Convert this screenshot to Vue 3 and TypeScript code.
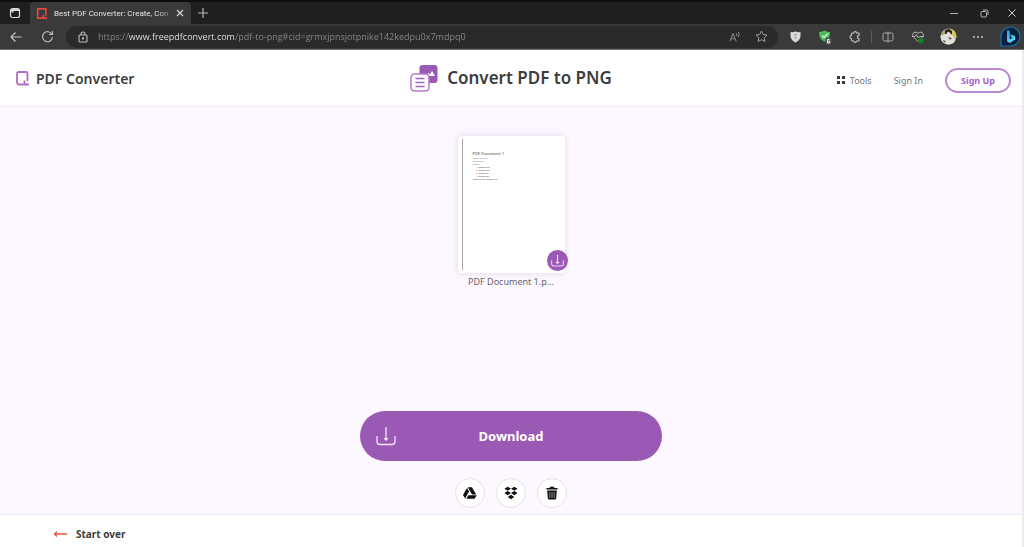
<script setup lang="ts">
import { ref } from 'vue'

const address = ref('https://www.freepdfconvert.com/pdf-to-png#cid=grmxjpnsjotpnike142kedpu0x7mdpq0')
const previewSteps: string[] = ['Sample one', 'Sample two', 'Sample six', 'Sample ten']
</script>

<template>
  <div class="window">
    <div class="tabbar">
      <button class="tab-menu" type="button" aria-label="Tab actions">
        <svg width="12" height="12" viewBox="0 0 12 12" fill="none" stroke="#d8d8d8" stroke-width="1.2">
          <rect x="1.5" y="1.5" width="9" height="9" rx="2" />
          <path d="M2 3h8M3.500 3v2.500" stroke-width="2" />
        </svg>
      </button>
      <div class="tab">
        <svg class="tab-icon" width="12" height="13" viewBox="0 0 14 15" fill="none" stroke="#e2483d" stroke-width="2">
          <path d="M8 13H2V2h9.500v8M8.500 9v4H13" />
        </svg>
        <span class="tab-title">Best PDF Converter: Create, Con</span>
        <button class="tab-close" type="button" aria-label="Close tab">
          <svg width="8" height="8" viewBox="0 0 8 8" stroke="#d5d5d5" stroke-width="1.2"><path d="M1 1l6 6M7 1L1 7" /></svg>
        </button>
      </div>
      <button class="new-tab" type="button" aria-label="New tab">
        <svg width="10" height="10" viewBox="0 0 10 10" stroke="#b5b5b5" stroke-width="1.2"><path d="M5 0v10M0 5h10" /></svg>
      </button>
      <div class="controls">
        <button type="button" aria-label="Minimize"><svg width="8" height="8" viewBox="0 0 8 8" stroke="#b0b0b0"><path d="M0 4.500h8" /></svg></button>
        <button type="button" aria-label="Restore">
          <svg width="9" height="9" viewBox="0 0 9 9" fill="none" stroke="#b5b5b5"><rect x="1" y="2.500" width="5.500" height="5.500" rx="1" /><path d="M3 1h3.500A1.500 1.500 0 0 1 8 2.500V6" /></svg>
        </button>
        <button type="button" aria-label="Close"><svg width="8" height="8" viewBox="0 0 8 8" stroke="#d0d0d0"><path d="M.5.5l7 7M7.500.5l-7 7" /></svg></button>
      </div>
    </div>

    <div class="toolbar">
      <button class="nav-btn" type="button" aria-label="Back">
        <svg width="12" height="12" viewBox="0 0 12 12" fill="none" stroke="#c4c4c4" stroke-width="1.200"><path d="M11.500 6H1M5.500 1.500L1 6l4.500 4.500" /></svg>
      </button>
      <button class="nav-btn" type="button" aria-label="Refresh">
        <svg width="13" height="13" viewBox="0 0 13 13" fill="none" stroke="#b8b8b8" stroke-width="1.200"><path d="M11 4.500A5 5 0 1 0 11.500 7M11.500 1v3.500H8" /></svg>
      </button>
      <div class="address">
        <svg width="10" height="12" viewBox="0 0 10 12" fill="none" stroke="#c0c0c0" stroke-width="1.100"><rect x="1" y="4" width="8" height="7" rx="1" /><path d="M3 4V3a2 2 0 0 1 4 0v1" /><circle cx="5" cy="7.500" r=".6" fill="#c0c0c0" /></svg>
        <input v-model="address" class="url" type="text" aria-label="Address" spellcheck="false" />
        <button class="pill-btn" type="button" aria-label="Read aloud">
          <svg width="12" height="12" viewBox="0 0 12 12" fill="none" stroke="#8c8c8c"><path d="M.8 10.500L4 2.500l3.200 8M2 7.800h4M7.300 2.200q1.200 1.300 0 3M9.300 1q2 2.400 0 5" /></svg>
        </button>
        <button class="pill-btn" type="button" aria-label="Add to favorites">
          <svg width="13" height="13" viewBox="0 0 13 13" fill="none" stroke="#9c9c9c" stroke-linejoin="round"><path d="M6.500 1l1.700 3.500 3.800.5-2.800 2.700.7 3.800-3.400-1.800-3.400 1.800.7-3.800L1 5l3.800-.5z" /></svg>
        </button>
      </div>
      <button class="ext" type="button" aria-label="Shield">
        <svg width="11" height="12" viewBox="0 0 11 12"><path d="M.5 1Q3 1.500 5.500.5 8 1.500 10.500 1v4c0 3-2 5-5 6.500C2.500 10 .5 8 .5 5z" fill="#d9d9d9" /><path d="M7 3.500C4.500 3 4 4.500 5 5.300s2 1.200.3 2.700" fill="none" stroke="#8d8d8d" /></svg>
      </button>
      <button class="ext" type="button" aria-label="Protection">
        <svg width="16" height="16" viewBox="0 0 16 16"><path d="M2 3q3 0 5.500-1.500Q10 3 13 3c0 5-1.500 7.500-5.500 9.500C3.500 10.500 2 8 2 3z" fill="#4cba58" /><path d="M5 6.500l2 2 4-4" fill="none" stroke="#d7f3da" stroke-width="1.300" /><rect x="8.500" y="8.500" width="6" height="7" rx="1.500" fill="#555" /><path d="M12.500 10.500h-2v3.500h2v-1.800h-2" fill="none" stroke="#eee" /></svg>
      </button>
      <button class="ext" type="button" aria-label="Extensions">
        <svg width="12" height="12" viewBox="0 0 12 12" fill="none" stroke="#bdbdbd" stroke-width="1.200" stroke-linejoin="round"><path d="M3.500 2h1.300a1.400 1.400 0 0 1 2.800 0H10v2.300a1.600 1.600 0 0 0 0 3.200V10H7.600a1.400 1.400 0 0 1-2.800 0H3.500a1 1 0 0 1-1-1V7.500a1.500 1.500 0 0 1 0-3V3a1 1 0 0 1 1-1z" /></svg>
      </button>
      <span class="divider"></span>
      <button class="ext" type="button" aria-label="Split screen">
        <svg width="12" height="12" viewBox="0 0 12 12" fill="none" stroke="#a9a9a9"><rect x="1" y="2" width="10" height="8" rx="1.500" /><path d="M6 .5v11" /></svg>
      </button>
      <button class="ext" type="button" aria-label="Browser essentials">
        <svg width="14" height="14" viewBox="0 0 14 14" fill="none" stroke="#b2b2b2"><path d="M7 11.500L2 6.500C.2 3 4.800.5 7 3.500c2.200-3 6.800-.5 5 3z" /><path d="M1 6.500h3l1.300-2 2 3.500 1.200-1.500H13" /><circle cx="10" cy="10.500" r="2.700" fill="#168020" stroke="none" /></svg>
      </button>
      <button class="ext" type="button" aria-label="Profile">
        <svg width="17" height="17" viewBox="0 0 17 17"><defs><clipPath id="face"><circle cx="8.500" cy="8.500" r="8" /></clipPath></defs><g clip-path="url(#face)"><path d="M0 0h17v17H0z" fill="#a9a77c" /><path d="M10 0h7v10h-5z" fill="#cfc65b" /><path d="M0 8l5-2 7 1 3 4-1 6H0z" fill="#e3dfdc" /><path d="M5 2l4-1 3 2v3H5z" fill="#292824" /><circle cx="8.500" cy="6" r="2" fill="#eee6da" /><path d="M8 9l4 1-2 2zM3 12l3 1-2 2z" fill="#5a6145" /></g></svg>
      </button>
      <button class="ext" type="button" aria-label="Settings and more">
        <svg width="10" height="4" viewBox="0 0 10 4" fill="#c6c6c6"><circle cx="1" cy="2" r="1" /><circle cx="5" cy="2" r="1" /><circle cx="9" cy="2" r="1" /></svg>
      </button>
      <button class="ext bing" type="button" aria-label="Bing">
        <svg width="21" height="21" viewBox="0 0 21 21"><defs><linearGradient id="bingFill" x1="0" y1="0" x2="0.500" y2="1"><stop stop-color="#2b8ff0" /><stop offset="1" stop-color="#6adcf6" /></linearGradient></defs><path d="M1 20V10.500A9.500 9.500 0 1 1 10.500 20z" fill="#0b2039" stroke="#1870ae" stroke-width="1.200" /><path d="M7 4l2.700 1v8.500l3-1.700-1.500-.8-1-2.800 5 2v3.300L9.700 17 7 15.300z" fill="url(#bingFill)" /></svg>
      </button>
    </div>

    <div class="site">
      <header class="header">
        <a class="brand" href="#">
          <svg width="14" height="15" viewBox="0 0 14 15" fill="none" stroke="#ae6bc9" stroke-width="1.800"><path d="M7.500 13.500H3a2 2 0 0 1-2-2v-9a1.500 1.500 0 0 1 1.500-1.500h7.500a1.500 1.500 0 0 1 1.500 1.500V10M8.500 9.500v4H13" /></svg>
          <span>PDF Converter</span>
        </a>
        <h1 class="title">
          <svg width="28" height="28" viewBox="0 0 28 28"><rect x="9.500" y="1" width="18" height="18" rx="3" fill="#9b59b6" /><path d="M16 12l2.300-3 1.500 1.500L22 7l3 5z" fill="#fff" /><rect x="1" y="10" width="18" height="17" rx="3.500" fill="#fff" stroke="#b579cd" stroke-width="1.500" /><path d="M5.500 14.500h9M5.500 18.500h9M5.500 22.500h9" stroke="#a564bf" stroke-width="1.300" /></svg>
          <span>Convert PDF to PNG</span>
        </h1>
        <nav class="links">
          <a class="tools" href="#">
            <svg width="8" height="8" viewBox="0 0 8 8" fill="#333"><rect width="3" height="3" rx=".5" /><rect x="5" width="3" height="3" rx=".5" /><rect y="5" width="3" height="3" rx=".5" /><rect x="5" y="5" width="3" height="3" rx=".5" /></svg>
            Tools
          </a>
          <a href="#">Sign In</a>
          <a class="signup" href="#">Sign Up</a>
        </nav>
      </header>

      <main class="main">
        <figure class="doc">
          <div class="sheet">
            <div class="page">
              <p class="page-title">PDF Document 1</p>
              <p class="page-text">Sample text one</p>
              <p class="page-text">Sample text</p>
              <p class="page-text">Sample</p>
              <ol class="page-list">
                <li v-for="step in previewSteps" :key="step">{{ step }}</li>
              </ol>
              <p class="page-last">Thank you for reading this</p>
            </div>
            <button class="badge" type="button" aria-label="Download file">
              <svg width="13" height="13" viewBox="0 0 20 20" fill="none" stroke="#efdcf7" stroke-width="1.600"><path d="M1 10v5.500a3 3 0 0 0 3 3h12a3 3 0 0 0 3-3V10M10 1v13M7.500 12l2.500 2.500 2.500-2.500" /></svg>
            </button>
          </div>
          <figcaption>PDF Document 1.p...</figcaption>
        </figure>

        <div class="actions">
          <button class="download" type="button">
            <svg width="20" height="20" viewBox="0 0 20 20" fill="none" stroke="#f3e5f9" stroke-width="1.300"><path d="M1 10v5.500a3 3 0 0 0 3 3h12a3 3 0 0 0 3-3V10M10 1v13" /><path d="M7.500 12h5L10 15z" fill="#fff" stroke="none" /></svg>
            <span>Download</span>
          </button>
          <div class="round-row">
            <button type="button" aria-label="Save to Google Drive">
              <svg width="14" height="14" viewBox="0 0 14 14" fill="#111"><path d="M4.700 1.200h4.200l4.300 7.200H9.100zM4 2l2.100 3.600-4 7L0 9zM5.400 9.200h8.300l-2.100 3.600H3.300z" /></svg>
            </button>
            <button type="button" aria-label="Save to Dropbox">
              <svg width="14" height="14" viewBox="0 0 14 14" fill="#111"><path d="M3.700.7l3.300 2-3.300 2.100-3.300-2.100zM10.300.7l3.300 2-3.300 2.100L7 2.700zM3.700 5l3.300 2.100-3.300 2.100L.4 7.100zM10.300 5l3.300 2.100-3.300 2.100L7 7.100zM7 8.800l3.300 2.100L7 13.200l-3.300-2.300z" /></svg>
            </button>
            <button type="button" aria-label="Delete">
              <svg width="12" height="14" viewBox="0 0 12 14"><path d="M.5 2h3l.7-1.200h3.600L8.500 2h3v1.600H.5zM1.200 4.400h9.600L10.200 12a1.500 1.500 0 0 1-1.500 1.500H3.300A1.500 1.500 0 0 1 1.800 12z" fill="#111" /><path d="M3.800 6v6M6 6v6M8.200 6v6" stroke="#aaa" stroke-width=".8" /></svg>
            </button>
          </div>
        </div>
      </main>

      <footer class="footer">
        <a class="over" href="#">
          <svg width="14" height="8" viewBox="0 0 14 8" fill="none" stroke="#e4573f" stroke-width="1.300"><path d="M14 4H2M4 1.500L1.500 4 4 6.500" /></svg>
          Start over
        </a>
      </footer>
    </div>
  </div>
</template>

<style>
body {
  background: #fff;
}
</style>

<style scoped>
* {
  box-sizing: border-box;
}
.window {
  min-height: 100vh;
  display: flex;
  flex-direction: column;
  font-family: "Noto Sans", "Open Sans", sans-serif;
  color: #3d3d3d;
}
button {
  border: 0;
  padding: 0;
  background: none;
  display: flex;
  align-items: center;
  justify-content: center;
  font: inherit;
}
a {
  color: inherit;
  text-decoration: none;
}
svg {
  display: block;
  flex: none;
}
.tabbar {
  height: 24px;
  display: flex;
  align-items: stretch;
  background: #1f1f1f;
  border-top: 2px solid #0c0c0c;
}
.tab-menu {
  width: 30px;
}
.tab {
  width: 161px;
  display: flex;
  align-items: center;
  padding: 0 6px;
  background: #3a3a3a;
  border-radius: 4px 4px 0 0;
}
.tab-title {
  flex: 1;
  min-width: 0;
  margin-left: 6px;
  white-space: nowrap;
  font-family: Roboto, sans-serif;
  font-size: 8px;
  color: #e4e4e4;
  mask-image: linear-gradient(90deg, #000 85%, transparent);
}
.tab-close {
  width: 10px;
}
.new-tab {
  width: 24px;
}
.controls {
  display: flex;
  margin-left: auto;
}
.controls button {
  width: 31px;
}
.controls button:last-child {
  width: 24px;
}
.toolbar {
  height: 26px;
  display: flex;
  align-items: center;
  background: #3a3a3a;
  border-bottom: 1px solid #6b6b6b;
}
.nav-btn {
  width: 30px;
}
.nav-btn:first-child {
  width: 32px;
}
.address {
  flex: 1;
  height: 22px;
  margin: 0 2px 0 4px;
  padding: 0 4px 0 12px;
  display: flex;
  align-items: center;
  background: #2a2a2a;
  border-radius: 11px;
}
.url {
  flex: 1;
  min-width: 0;
  margin-left: 10px;
  padding: 0;
  border: 0;
  outline: 0;
  font-family: "Open Sans", sans-serif;
  font-size: 9px;
  line-height: 16px;
  color: transparent;
  background: linear-gradient(90deg, #888 30px, #eee 30px, #eee 136px, #888 136px);
  background-clip: text;
  -webkit-background-clip: text;
}
.pill-btn {
  width: 26px;
}
.ext {
  width: 30px;
}
.divider {
  width: 1px;
  height: 12px;
  margin: 0 1px;
  background: #5b5b5b;
}
.bing {
  width: 27px;
  margin-left: 4px;
}
.site {
  flex: 1;
  display: flex;
  flex-direction: column;
  border-right: 2px solid #ececec;
}
.header {
  height: 56px;
  padding: 0 11px;
  display: grid;
  grid-template-columns: 1fr auto 1fr;
  align-items: center;
  background: #fff;
}
.brand {
  display: flex;
  align-items: center;
  gap: 6px;
  padding-left: 5px;
  font-size: 14px;
  font-weight: 600;
}
.title {
  display: flex;
  align-items: center;
  gap: 9px;
  margin: 0;
  font-size: 17px;
  line-height: 24px;
  font-weight: 600;
}
.links {
  display: flex;
  align-items: center;
  justify-content: flex-end;
  gap: 22px;
  padding-top: 4px;
  font-size: 9px;
  color: #777;
}
.tools {
  display: flex;
  align-items: center;
  gap: 5px;
}
.signup {
  width: 66px;
  height: 25px;
  line-height: 21px;
  border: 2px solid #bd8ad5;
  border-radius: 13px;
  text-align: center;
  font-weight: 700;
  color: #a95fc8;
}
.main {
  flex: 1;
  display: flex;
  flex-direction: column;
  align-items: center;
  justify-content: space-between;
  gap: 24px;
  padding: 29px 0 6px;
  background: #fdf7ff;
  border-top: 1px solid #f1ebf3;
}
.doc {
  margin: 0;
  display: flex;
  flex-direction: column;
  align-items: center;
}
.sheet {
  position: relative;
  width: 107px;
  height: 137px;
  padding: 3px 4px;
  background: #fff;
  border-radius: 3px;
  box-shadow: 0 0 6px rgba(80, 50, 90, 0.16);
}
.page {
  height: 131px;
  padding: 12px 10px;
  border-left: 1px solid #aaa;
}
.page p {
  margin: 0;
}
.page-title {
  font-size: 4px;
  line-height: 6px;
  white-space: nowrap;
}
.page-text,
.page-list {
  font-size: 2px;
  line-height: 3px;
  color: #6d7b88;
}
.page-list {
  margin: 0;
  padding-left: 6px;
  color: #444;
}
.page-last {
  font-size: 2px;
  line-height: 4px;
}
.badge {
  position: absolute;
  right: -3px;
  bottom: 2px;
  width: 21px;
  height: 21px;
  border-radius: 50%;
  background: #9b59b6;
}
figcaption {
  margin-top: 2px;
  font-size: 9px;
  line-height: 14px;
  color: #666;
}
.actions {
  display: flex;
  flex-direction: column;
  align-items: center;
  gap: 17px;
}
.download {
  width: 302px;
  height: 50px;
  padding: 0 16px;
  display: grid;
  grid-template-columns: 20px 1fr 20px;
  border-radius: 25px;
  background: #9b59b6;
  color: #fff;
  font-size: 13px;
  font-weight: 700;
}
.round-row {
  display: flex;
  gap: 11px;
}
.round-row button {
  width: 30px;
  height: 30px;
  border: 1px solid #e6e0e8;
  border-radius: 50%;
  background: #fff;
}
.footer {
  height: 33px;
  padding: 6px 53px 0;
  display: flex;
  align-items: center;
  background: #fff;
  border-top: 1px solid #eee9f0;
}
.over {
  display: flex;
  align-items: center;
  gap: 9px;
  font-size: 10px;
  font-weight: 700;
}
</style>
